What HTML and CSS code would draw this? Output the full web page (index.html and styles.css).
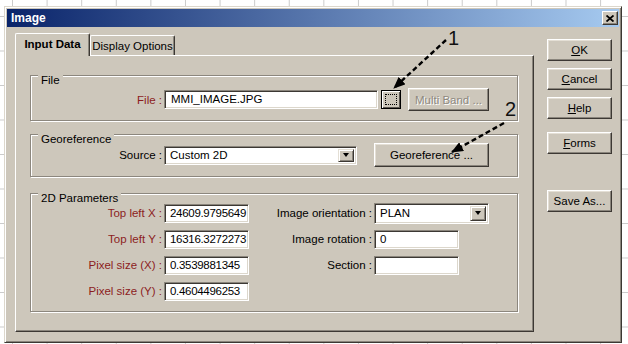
FILE: index.html
```html
<!DOCTYPE html>
<html lang="en">

<head>
    <meta charset="UTF-8">
    <title>Image</title>
    <link rel="stylesheet" href="styles.css">
</head>

<body>

    <div class="dialog">
        <div class="titlebar">
            <span class="title">Image</span>
            <button class="close">
                <svg width="8" height="7" viewBox="0 0 8 7">
                    <path d="M0.5 0.5 L7.5 6.5 M7.5 0.5 L0.5 6.5" stroke="#000" stroke-width="1.8" fill="none" />
                </svg>
            </button>
        </div>

        <div class="body">
            <div class="main">
                <div class="tabs">
                    <div class="tab active">Input Data</div>
                    <div class="tab">Display Options</div>
                </div>

                <div class="panel">
                    <!-- File -->
                    <div class="group group-file">
                        <div class="legend">File</div>
                        <div class="row">
                            <label class="lbl req">File :</label>
                            <div class="field file-name">MMI_IMAGE.JPG</div>
                            <button class="browse"><span class="focus"></span></button>
                            <button class="btn multi" disabled>Multi Band ...</button>
                        </div>
                    </div>

                    <!-- Georeference -->
                    <div class="group group-geo">
                        <div class="legend">Georeference</div>
                        <div class="row">
                            <label class="lbl">Source :</label>
                            <div class="select source">
                                <span class="value">Custom 2D</span>
                                <span class="drop"><span class="arrow"></span></span>
                            </div>
                            <button class="btn georef">Georeference ...</button>
                        </div>
                    </div>

                    <!-- 2D Parameters -->
                    <div class="group group-2d">
                        <div class="legend">2D Parameters</div>
                        <div class="grid">
                            <label class="lbl req">Top left X :</label>
                            <div class="field num-field">24609.9795649</div>
                            <label class="lbl">Image orientation :</label>
                            <div class="select orient">
                                <span class="value">PLAN</span>
                                <span class="drop"><span class="arrow"></span></span>
                            </div>

                            <label class="lbl req">Top left Y :</label>
                            <div class="field num-field">16316.3272273</div>
                            <label class="lbl">Image rotation :</label>
                            <div class="field">0</div>

                            <label class="lbl req">Pixel size (X) :</label>
                            <div class="field num-field">0.3539881345</div>
                            <label class="lbl">Section :</label>
                            <div class="field"></div>

                            <label class="lbl req">Pixel size (Y) :</label>
                            <div class="field num-field">0.4604496253</div>
                        </div>
                    </div>
                </div>
            </div>

            <div class="side">
                <button class="btn side-btn"><u>O</u>K</button>
                <button class="btn side-btn"><u>C</u>ancel</button>
                <button class="btn side-btn"><u>H</u>elp</button>
                <button class="btn side-btn forms"><u>F</u>orms</button>
                <button class="btn side-btn save">Save As...</button>
            </div>
        </div>
    </div>

    <svg class="notes" width="628" height="344">
        <defs>
            <marker id="head" viewBox="0 0 12 10" refX="11" refY="5" markerWidth="12" markerHeight="10"
                markerUnits="userSpaceOnUse" orient="auto">
                <path d="M0 0 L12 5 L0 10 Z" fill="#000" />
            </marker>
        </defs>
        <line x1="446" y1="40" x2="394" y2="88" stroke="#000" stroke-width="2.4" stroke-dasharray="5 3"
            marker-end="url(#head)" />
        <line x1="504" y1="123" x2="452" y2="152" stroke="#000" stroke-width="2.4" stroke-dasharray="5 3"
            marker-end="url(#head)" />
        <text x="448" y="45" class="num">1</text>
        <text x="505" y="116" class="num">2</text>
    </svg>

</body>

</html>
```

FILE: styles.css
```css
body {
    margin: 0;
    width: 628px;
    height: 344px;
    overflow: hidden;
    position: relative;
    font-family: "Liberation Sans", Arial, sans-serif;
    font-size: 11.5px;
    color: #000;
    background-color: #fff;
    background-image:
        linear-gradient(to right, #cbcbcb 1px, transparent 1px),
        linear-gradient(to bottom, #cbcbcb 1px, transparent 1px);
    background-size: 34.6px 34.5px;
    background-position: 12px 16px;
}

button {
    font-family: inherit;
    font-size: inherit;
    color: inherit;
    padding: 0;
    margin: 0;
}

.dialog {
    box-sizing: border-box;
    width: 618px;
    height: 337px;
    margin: 6px 0 0 4px;
    padding: 2px;
    background-color: #cdc7bb;
    border: 1px solid;
    border-color: #dcd7cc #3c3833 #3c3833 #dcd7cc;
    box-shadow: inset 1px 1px 0 #fff, inset -1px -1px 0 #8a857c;
}

.titlebar {
    height: 18px;
    display: flex;
    align-items: center;
    justify-content: space-between;
    padding: 0 1px 0 4px;
    background: linear-gradient(to right, #0a246a, #a6caf0);
}

.title {
    color: #fff;
    font-weight: bold;
    font-size: 12px;
}

.close {
    box-sizing: border-box;
    width: 16px;
    height: 14px;
    display: flex;
    align-items: center;
    justify-content: center;
    background-color: #cdc7bb;
    border: 1px solid;
    border-color: #fff #3c3833 #3c3833 #fff;
    box-shadow: inset -1px -1px 0 #8a857c;
}

.body {
    display: flex;
    padding: 6px 0 0 8px;
}

.main {
    width: 519px;
}

/* tabs */
.tabs {
    display: flex;
    align-items: flex-end;
    height: 22px;
}

.tab {
    box-sizing: border-box;
    height: 20px;
    width: 85px;
    display: flex;
    align-items: center;
    justify-content: center;
    border-top: 1px solid #fff;
    border-left: 1px solid #fff;
    border-right: 1px solid #3c3833;
    box-shadow: inset -1px 0 0 #8a857c;
    border-radius: 2px 2px 0 0;
    background-color: #cdc7bb;
}

.tab.active {
    width: 75px;
    height: 23px;
    margin-bottom: -1px;
    position: relative;
    z-index: 1;
    font-weight: bold;
    padding-bottom: 2px;
}

.panel {
    box-sizing: border-box;
    height: 277px;
    padding: 19px 15px 0 14px;
    border: 1px solid;
    border-color: #fff #3c3833 #3c3833 #fff;
    box-shadow: inset -1px -1px 0 #8a857c;
}

/* group boxes */
.group {
    box-sizing: border-box;
    border: 1px solid #8c877e;
    box-shadow: inset 1px 1px 0 #fff, 1px 1px 0 #fff;
}

.legend {
    width: max-content;
    height: 13px;
    line-height: 13px;
    margin: -2px 0 0 7px;
    padding: 0 3px;
    background-color: #cdc7bb;
    position: relative;
}

.group-file {
    height: 46px;
}

.group-file .legend {
    margin-bottom: 1px;
}

.group-geo {
    height: 43px;
    margin-top: 13px;
}

.group-geo .legend {
    margin-bottom: -3px;
}

.group-2d {
    height: 119px;
    margin-top: 16px;
}

.group-2d .legend {
    margin-bottom: -5px;
}

.row {
    display: flex;
    align-items: center;
}

.lbl {
    width: 131px;
    text-align: right;
    white-space: nowrap;
}

.grid .lbl {
    width: auto;
}

.req {
    color: #8c1d1d;
}

/* sunken fields */
.field,
.select {
    box-sizing: border-box;
    height: 19px;
    background-color: #fff;
    border: 1px solid;
    border-color: #8a857c #fff #fff #8a857c;
    box-shadow: inset 1px 1px 0 #3c3833, inset -1px -1px 0 #dcd7cc;
}

.field {
    width: 85px;
    padding: 0 1px 0 5px;
    line-height: 17px;
    white-space: nowrap;
    overflow: hidden;
}

.num-field {
    letter-spacing: -0.3px;
}

.row .field,
.row .select {
    margin-left: 2px;
}

.file-name {
    width: 214px;
    padding-left: 6px;
}

.select {
    display: flex;
    align-items: center;
    padding: 2px 2px 2px 5px;
}

.select .value {
    flex: 1;
}

.drop {
    box-sizing: border-box;
    width: 16px;
    height: 100%;
    display: flex;
    align-items: center;
    justify-content: center;
    background-color: #cdc7bb;
    border: 1px solid;
    border-color: #e4dfd5 #3c3833 #3c3833 #e4dfd5;
    box-shadow: inset 1px 1px 0 #fff, inset -1px -1px 0 #8a857c;
}

.arrow {
    width: 0;
    height: 0;
    border-left: 3.5px solid transparent;
    border-right: 3.5px solid transparent;
    border-top: 4px solid #000;
}

.source {
    width: 193px;
}

.orient {
    width: 115px;
    height: 21px;
}

/* raised buttons */
.btn {
    box-sizing: border-box;
    background-color: #cdc7bb;
    border: 1px solid;
    border-color: #fff #3c3833 #3c3833 #fff;
    box-shadow: inset -1px -1px 0 #8a857c, inset 1px 1px 0 #e4dfd5;
    text-align: center;
}

.btn u {
    text-decoration: underline;
    text-underline-offset: 1px;
}

.browse {
    box-sizing: border-box;
    width: 20px;
    height: 19px;
    margin-left: 3px;
    padding: 3px;
    background-color: #cdc7bb;
    border: 1px solid #000;
    box-shadow: inset 1px 1px 0 #fff, inset -1px -1px 0 #5a5650;
}

.browse .focus {
    display: block;
    height: 100%;
    border: 1px dotted #000;
    box-sizing: border-box;
}

.multi {
    width: 81px;
    height: 23px;
    margin-left: 7px;
    color: #8e897f;
    text-shadow: 1px 1px 0 #fff;
}

.georef {
    width: 115px;
    height: 24px;
    margin-left: 17px;
}

.grid {
    display: grid;
    grid-template-columns: 131px 85px 121px 115px;
    grid-auto-rows: 26px;
    column-gap: 2px;
    align-items: center;
    justify-items: end;
}

.grid .field,
.grid .select {
    justify-self: start;
}

/* side buttons */
.side {
    display: flex;
    flex-direction: column;
    margin-left: 13px;
    padding-top: 6px;
    width: 65px;
}

.side-btn {
    height: 22px;
    margin-bottom: 7px;
}

.forms {
    margin-top: 6px;
}

.save {
    margin-top: 29px;
}

/* annotations drawn over the dialog */
.notes {
    position: absolute;
    top: 0;
    left: 0;
    pointer-events: none;
}

.num {
    font-family: "Liberation Sans", Arial, sans-serif;
    font-size: 20px;
    fill: #111;
}
```
